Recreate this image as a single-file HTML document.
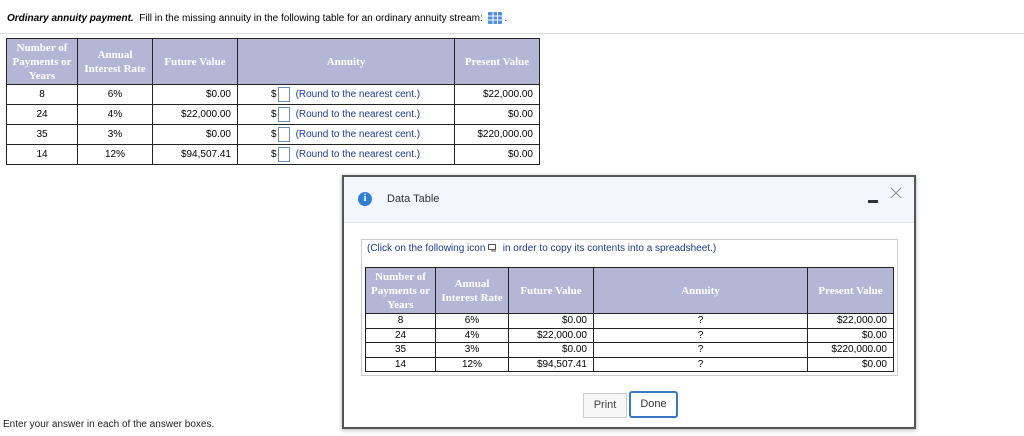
<!DOCTYPE html>
<html><head><style>
*{margin:0;padding:0;box-sizing:border-box}
body{width:1024px;height:436px;background:#fff;font-family:"Liberation Sans",Arial,sans-serif;position:relative;overflow:hidden;color:#000}
.a{position:absolute}
table{border-collapse:collapse;table-layout:fixed;position:absolute}
th{background:#b4b6d6;color:#fff;font-family:"Liberation Serif",serif;font-weight:bold;border:1px solid #222;line-height:14px;padding:0 2px}
td{border:1px solid #222;font-size:10px;white-space:nowrap}
.m th{font-size:11px}
.m td{height:20px;padding:0 6px}
.d th{font-size:11px;line-height:14px}
.d td{height:14.5px;padding:0 6px;font-size:10px}
.r{text-align:right}.c{text-align:center}
.bx{display:inline-block;width:12px;height:15px;border:1px solid #6b8fb5;vertical-align:middle;margin-left:1px}
.rn{color:#1f3a8a;margin-left:6px}
</style></head><body>
<div class="a" style="left:7px;top:12px;font-size:10px"><b><i>Ordinary annuity payment.</i></b>&nbsp; Fill in the missing annuity in the following table for an ordinary annuity stream:
<svg width="14" height="12" style="vertical-align:-3px;margin-left:2px"><rect x="0" y="0" width="14" height="12" rx="1" fill="#4f8ee0"/><g stroke="#fff" stroke-width="1"><line x1="0" y1="4" x2="14" y2="4"/><line x1="0" y1="8" x2="14" y2="8"/><line x1="5" y1="0" x2="5" y2="12"/><line x1="9.5" y1="0" x2="9.5" y2="12"/></g></svg> .</div>
<div class="a" style="left:0;top:33px;width:1024px;height:1px;background:#ddd"></div>
<table class="m" style="left:6px;top:38px;width:533px">
<colgroup><col style="width:71px"><col style="width:75px"><col style="width:85px"><col style="width:217px"><col style="width:85px"></colgroup>
<tr style="height:46px"><th>Number of Payments or Years</th><th>Annual Interest Rate</th><th>Future Value</th><th>Annuity</th><th>Present Value</th></tr>
<tr><td class="c">8</td><td class="c">6%</td><td class="r">$0.00</td><td style="padding-left:33px">$<span class="bx"></span><span class="rn">(Round to the nearest cent.)</span></td><td class="r">$22,000.00</td></tr>
<tr><td class="c">24</td><td class="c">4%</td><td class="r">$22,000.00</td><td style="padding-left:33px">$<span class="bx"></span><span class="rn">(Round to the nearest cent.)</span></td><td class="r">$0.00</td></tr>
<tr><td class="c">35</td><td class="c">3%</td><td class="r">$0.00</td><td style="padding-left:33px">$<span class="bx"></span><span class="rn">(Round to the nearest cent.)</span></td><td class="r">$220,000.00</td></tr>
<tr><td class="c">14</td><td class="c">12%</td><td class="r">$94,507.41</td><td style="padding-left:33px">$<span class="bx"></span><span class="rn">(Round to the nearest cent.)</span></td><td class="r">$0.00</td></tr>
</table>
<div class="a" style="left:3px;top:419px;font-size:10px;color:#222">Enter your answer in each of the answer boxes.</div>

<div class="a" style="left:342px;top:175px;width:574px;height:254px;border:2px solid #555;background:#fff;box-shadow:0 1px 4px rgba(0,0,0,.3)">
<div class="a" style="left:0;top:0;width:570px;height:46px;background:#f2f6fd;border-bottom:1px solid #e0e6f0"></div>
<div class="a" style="left:14px;top:15px;width:14px;height:14px;border-radius:50%;background:#2f7fd8;color:#fff;font:bold 10px 'Liberation Serif',serif;text-align:center;line-height:14px">i</div>
<div class="a" style="left:43px;top:16px;font-size:11px;color:#333">Data Table</div>
<div class="a" style="left:524px;top:23px;width:10px;height:3px;background:#333"></div>
<svg class="a" style="left:546px;top:10px" width="12" height="12"><path d="M1 1L11 11M11 1L1 11" stroke="#888" stroke-width="1"/></svg>
<div class="a" style="left:17px;top:62px;width:537px;height:137px;border:1px solid #ccc"></div>
<div class="a" style="left:23px;top:66px;font-size:10px;color:#1f3a8a">(Click on the following icon <svg width="9" height="8" style="vertical-align:-1px"><rect x="0.5" y="0.5" width="7" height="5" fill="none" stroke="#555"/><line x1="3" y1="7" x2="8" y2="7" stroke="#555"/></svg>&nbsp; in order to copy its contents into a spreadsheet.)</div>
<table class="d" style="left:21px;top:90px;width:528px">
<colgroup><col style="width:70px"><col style="width:73px"><col style="width:85px"><col style="width:214px"><col style="width:86px"></colgroup>
<tr style="height:46px"><th>Number of Payments or Years</th><th>Annual Interest Rate</th><th>Future Value</th><th>Annuity</th><th>Present Value</th></tr>
<tr><td class="c">8</td><td class="c">6%</td><td class="r">$0.00</td><td class="c">?</td><td class="r">$22,000.00</td></tr>
<tr><td class="c">24</td><td class="c">4%</td><td class="r">$22,000.00</td><td class="c">?</td><td class="r">$0.00</td></tr>
<tr><td class="c">35</td><td class="c">3%</td><td class="r">$0.00</td><td class="c">?</td><td class="r">$220,000.00</td></tr>
<tr><td class="c">14</td><td class="c">12%</td><td class="r">$94,507.41</td><td class="c">?</td><td class="r">$0.00</td></tr>
</table>
<div class="a" style="left:239px;top:216px;width:44px;height:25px;border:1px solid #ccc;background:#f7f7f7;font-size:11px;color:#444;text-align:center;line-height:23px">Print</div>
<div class="a" style="left:285px;top:214px;width:49px;height:27px;border:2px solid #3b78c2;border-radius:3px;background:#fff;font-size:11px;color:#333;text-align:center;line-height:23px">Done</div>
</div>
</body></html>
